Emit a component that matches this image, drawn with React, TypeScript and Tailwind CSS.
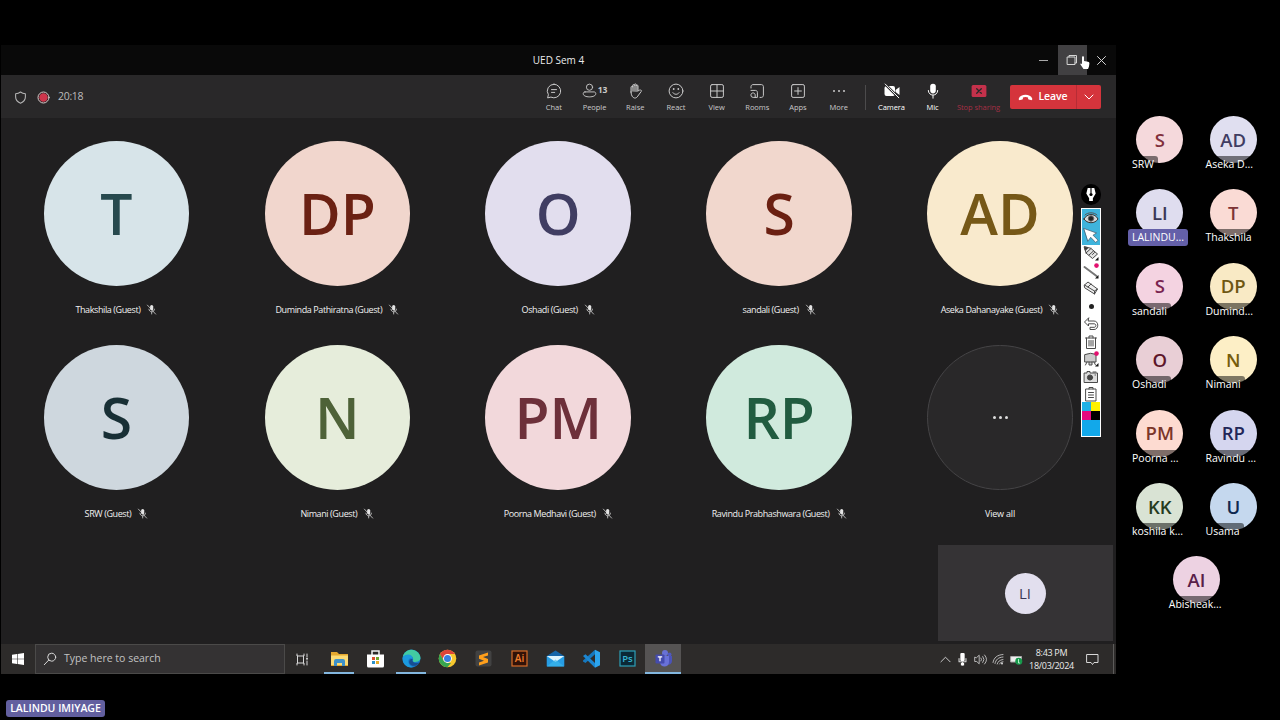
import clsx from "clsx";
import type { ReactNode } from "react";

type IconProps = { children: ReactNode; className?: string; box?: string };

const Icon = ({ children, className = "size-4", box = "0 0 16 16" }: IconProps) => (
  <svg
    viewBox={box}
    className={clsx("shrink-0", className)}
    fill="none"
    stroke="currentColor"
    strokeWidth="1"
    strokeLinecap="round"
    strokeLinejoin="round"
  >
    {children}
  </svg>
);

const guests = [
  { initials: "T", name: "Thakshila (Guest)", color: "bg-[#d7e4e9] text-[#27494e]" },
  { initials: "DP", name: "Duminda Pathiratna (Guest)", color: "bg-[#f1d6cd] text-[#6b2113]" },
  { initials: "O", name: "Oshadi (Guest)", color: "bg-[#e2deee] text-[#403d62]" },
  { initials: "S", name: "sandali (Guest)", color: "bg-[#f1d7cd] text-[#6b2012]" },
  { initials: "AD", name: "Aseka Dahanayake (Guest)", color: "bg-[#f9eacd] text-[#765817]" },
  { initials: "S", name: "SRW (Guest)", color: "bg-[#ced7de] text-[#182f35]" },
  { initials: "N", name: "Nimani (Guest)", color: "bg-[#e6eddb] text-[#4e6238]" },
  { initials: "PM", name: "Poorna Medhavi (Guest)", color: "bg-[#f2d8db] text-[#6d303a]" },
  { initials: "RP", name: "Ravindu Prabhashwara (Guest)", color: "bg-[#d0eadd] text-[#215c40]" },
];

const people = [
  { initials: "S", name: "SRW", color: "bg-[#f5d9dc] text-[#81303c]" },
  { initials: "AD", name: "Aseka D...", color: "bg-[#e0dff0] text-[#3f3c62]" },
  { initials: "LI", name: "LALINDU...", color: "bg-[#dfddef] text-[#393755]", active: true },
  { initials: "T", name: "Thakshila", color: "bg-[#fadbd5] text-[#7d3435]" },
  { initials: "S", name: "sandali", color: "bg-[#f4d3e1] text-[#7a2350]" },
  { initials: "DP", name: "Dumind...", color: "bg-[#f9eac5] text-[#6f5712]" },
  { initials: "O", name: "Oshadi", color: "bg-[#e9cfd6] text-[#5d1629]" },
  { initials: "N", name: "Nimani", color: "bg-[#fdefc6] text-[#775c0c]" },
  { initials: "PM", name: "Poorna ...", color: "bg-[#fddbd1] text-[#7b362a]" },
  { initials: "RP", name: "Ravindu ...", color: "bg-[#d5d6ef] text-[#222658]" },
  { initials: "KK", name: "koshila k...", color: "bg-[#d9e3d4] text-[#253b1d]" },
  { initials: "U", name: "Usama", color: "bg-[#c5d8ee] text-[#102950]" },
  { initials: "AI", name: "Abisheak...", color: "bg-[#edd2e2] text-[#582049]" },
];

const MutedMic = () => (
  <Icon className="size-[11px] text-[#e4e4e4]" box="0 0 12 12">
    <rect x="4.5" y="1" width="3.4" height="6" rx="1.7" fill="currentColor" stroke="none" />
    <path d="M3.2 5.6c0 4 6 4 6 0M6.2 8.7v2.2M1.5 1.2l9 9.8" strokeWidth=".8" />
  </Icon>
);

const actions = [
  {
    label: "Chat",
    icon: (
      <Icon>
        <path d="M8 1.2a6.8 6.8 0 1 1-3.1 12.9l-3.3.8.8-3.2A6.8 6.8 0 0 1 8 1.2ZM5.5 6.6h5M5.5 9.4h3.2" />
      </Icon>
    ),
  },
  {
    label: "People",
    icon: (
      <>
        <Icon className="size-[15px]">
          <circle cx="8" cy="4.5" r="3.3" />
          <path d="M3.2 9.5h9.6c1.1 0 1.9.8 1.9 1.8 0 2.3-2.8 3.5-6.7 3.5s-6.7-1.2-6.7-3.5c0-1 .8-1.8 1.9-1.8Z" />
        </Icon>
        <span className="text-[8.5px] font-bold">13</span>
      </>
    ),
  },
  {
    label: "Raise",
    icon: (
      <Icon>
        <path d="M4 9V4.200c0-1.100 1.600-1.100 1.600 0V2.500c0-1.200 1.800-1.200 1.800 0v-.8c0-1.100 1.800-1.100 1.800 0v1.200c0-1.100 1.800-1.100 1.800 0v5.200c1-1 2.100-1.400 3.200-.8.6.4.5.8 0 1.200l-3.400 4.600C8.200 17.200 4 14.500 4 9Z" />
        <path d="M4.500 4.500 6 2.500l4-1 .8 2V9l-6.300-.5z" fill="currentColor" stroke="none" opacity=".6" />
      </Icon>
    ),
  },
  {
    label: "React",
    icon: (
      <Icon>
        <circle cx="8" cy="8" r="6.900" />
        <path d="M4.900 9.700c1.600 2.200 4.600 2.200 6.200 0" />
        <path d="M5.700 6h.01M10.300 6h.01" strokeWidth="1.800" />
      </Icon>
    ),
  },
  {
    label: "View",
    icon: (
      <Icon>
        <rect x="1.600" y="1.600" width="12.800" height="12.800" rx="1.500" />
        <path d="M8 1.600v12.800M1.600 8h12.800" />
      </Icon>
    ),
  },
  {
    label: "Rooms",
    icon: (
      <Icon>
        <path d="M2 5V3.500c0-1 .9-1.900 2-1.900h8.400c1.100 0 2 .9 2 2v8.800c0 1.100-.9 2-2 2H11" />
        <path d="M2 7.400h4.400c1.200 0 2 .8 2 2v5H4.200a2.300 2.300 0 0 1-2.300-2.300c0-2.900 4.300-2.900 4.300 0v2.300" />
      </Icon>
    ),
  },
  {
    label: "Apps",
    icon: (
      <Icon>
        <rect x="1.600" y="1.600" width="12.800" height="12.800" rx="1.500" />
        <path d="M8 4.600v6.800M4.600 8h6.800" />
      </Icon>
    ),
  },
  {
    label: "More",
    icon: (
      <Icon>
        <path d="M3 8h.01M8 8h.01M13 8h.01" strokeWidth="2" />
      </Icon>
    ),
  },
];

const ActionLabel = ({ children }: { children: ReactNode }) => (
  <span className="mt-[3px] whitespace-nowrap text-[7.5px] leading-[10px] tracking-[-0.05px]">{children}</span>
);

const TitleBar = () => (
  <div className="relative flex h-[30px] items-center justify-end bg-[#090909] text-[#d5d5d5]">
    <span className="absolute inset-x-0 top-[8px] text-center text-[10px] leading-[15px] text-[#ececec]">
      UED Sem 4
    </span>
    <div className="flex w-[29px] justify-center">
      <span className="h-px w-[9px] bg-[#aaa]" />
    </div>
    <div className="flex h-full w-[29px] items-center justify-center bg-[#414042]">
      <Icon className="mr-px size-3" box="0 0 12 12">
        <path d="M1.500 3h7.500v7.500H1.500zM3 3V1.500h7.500V9H9" />
      </Icon>
    </div>
    <div className="flex w-[29px] justify-center">
      <Icon className="size-[11px]" box="0 0 11 11">
        <path d="m1.500 1.500 8 8m0-8-8 8" />
      </Icon>
    </div>
    <svg viewBox="0 0 10 14" className="absolute left-[1079px] top-[11px] h-[14px] w-[10px]" fill="#fff">
      <path d="M2 1.200C2 0 4 0 4 1.200V5l4 .8c1 .2 1.500.8 1.400 1.800L9 10.500 8 13H3.500L.5 8.500c-.6-1 .4-1.600 1.500-.5z" />
    </svg>
  </div>
);

const Toolbar = () => (
  <div className="flex h-[43px] items-center bg-[#292829] pt-px text-[#c9c9c9]">
    <div className="flex w-[532.5px] items-center pl-[13px]">
      <Icon className="size-[13px] text-[#b5b5b5]">
        <path
          d="M8 1.200c1.700 1.300 3.600 2 6 2.100v4.200c0 3.500-2 6-6 7.500-4-1.500-6-4-6-7.500V3.300c2.400-.1 4.300-.8 6-2.100Z"
          strokeWidth="1.300"
        />
      </Icon>
      <Icon className="ml-[10px] size-[13px]" box="0 0 13 13">
        <circle cx="6.500" cy="6.500" r="5.500" stroke="#dccaca" />
        <circle cx="6.500" cy="6.500" r="4.200" fill="#cf364c" stroke="none" />
      </Icon>
      <span className="ml-[8px] text-[10.5px] tracking-[-0.3px] text-[#bcbcbc]">20:18</span>
    </div>
    {actions.map(({ label, icon }) => (
      <div key={label} className="flex w-[40.7px] flex-col items-center">
        <div className="flex h-4 items-center gap-px">{icon}</div>
        <ActionLabel>{label}</ActionLabel>
      </div>
    ))}
    <span className="ml-[5.5px] h-[25px] w-px bg-[#4c4b4c]" />
    <div className="ml-[5.5px] flex w-[41px] flex-col items-center text-white">
      <Icon>
        <path
          d="M3 3h6q2 0 2 2v6q0 2-2 2H2.500Q.5 13 .5 11V5q0-2 2-2zm8.500 4L15.500 4v8l-4-3z"
          fill="currentColor"
          stroke="none"
        />
        <path d="m.8.8 14 14" stroke="#292829" strokeWidth="2.500" />
        <path d="m1.200 1 13.600 13.800" />
      </Icon>
      <ActionLabel>Camera</ActionLabel>
    </div>
    <div className="flex w-[41px] flex-col items-center text-white">
      <Icon>
        <rect x="5.200" y=".8" width="5.600" height="9.600" rx="2.800" fill="currentColor" stroke="none" />
        <path d="M3.300 7.500c0 6.200 9.400 6.200 9.400 0M8 12.500v2.700" />
      </Icon>
      <ActionLabel>Mic</ActionLabel>
    </div>
    <div className="flex w-[51px] flex-col items-center text-[#a52f45]">
      <Icon>
        <rect x=".6" y="2" width="14.800" height="12" rx="1.500" fill="#c4314b" stroke="none" />
        <path d="m5.700 5.700 4.600 4.600m0-4.600-4.600 4.600" stroke="#292829" strokeWidth="1.300" />
      </Icon>
      <ActionLabel>Stop sharing</ActionLabel>
    </div>
    <div className="ml-[6px] flex h-[24px] w-[91px] items-center rounded-[2px] bg-[#d5343c] text-white">
      <div className="flex h-full w-[67px] items-center justify-center gap-[5px] border-r border-[#b72c35]">
        <Icon className="h-[9px] w-[15px]" box="0 0 15 9">
          <path
            d="M.8 5.600C2.500.6 12.500.6 14.200 5.600c.3 1.400-.4 1.800-1.500 1.500l-2-.5c-.7-.3-.7-1-.6-2-1.200-.7-4-.7-5.200 0 .1 1 .1 1.700-.6 2l-2 .5C1.200 7.400.5 7 .8 5.600Z"
            fill="currentColor"
            stroke="none"
          />
        </Icon>
        <span className="text-[10.5px] font-semibold tracking-[-0.1px]">Leave</span>
      </div>
      <Icon className="ml-[7px] size-[10px]" box="0 0 10 10">
        <path d="m1 3 4 4 4-4" />
      </Icon>
    </div>
  </div>
);

const Stage = () => (
  <div className="relative h-[526px] bg-[#201f20]">
    <div className="grid grid-cols-[repeat(5,220.9px)] gap-y-[28px] pl-[5px] pt-[22.5px]">
      {guests.map(({ initials, name, color }) => (
        <div key={name} className="flex h-[176px] flex-col items-center">
          <div
            className={clsx(
              "flex size-[145.5px] items-center justify-center rounded-full text-[57px] font-semibold",
              color,
            )}
          >
            {initials}
          </div>
          <div className="mt-[16.5px] flex h-[14px] items-center gap-[6px] text-[9px] tracking-[-0.4px] text-[#f0f0f0]">
            <span className="whitespace-nowrap">{name}</span>
            <MutedMic />
          </div>
        </div>
      ))}
      <div className="flex h-[176px] flex-col items-center">
        <div className="flex size-[145.5px] items-center justify-center gap-[3px] rounded-full border border-[#454446] bg-[#292829]">
          <span className="size-[3px] rounded-full bg-[#ddd]" />
          <span className="size-[3px] rounded-full bg-[#ddd]" />
          <span className="size-[3px] rounded-full bg-[#ddd]" />
        </div>
        <span className="mt-[16.5px] text-[9px] leading-[14px] tracking-[-0.2px] text-[#f0f0f0]">View all</span>
      </div>
    </div>
    {/* self view */}
    <div className="absolute bottom-[3px] right-[3.5px] flex h-[96px] w-[175px] items-center justify-center bg-[#353335]">
      <div className="flex size-[41px] items-center justify-center rounded-full bg-[#e2dfee] text-[15px] font-medium text-[#393755]">
        LI
      </div>
    </div>
    <PenTools />
  </div>
);

// floating annotation palette
const PenTools = () => (
  <div className="absolute right-[15px] top-[66px] flex w-[20px] flex-col items-center text-[#4a4a4a]">
    <div className="flex h-[21px] w-5 items-center justify-center rounded-full bg-black">
      <svg viewBox="0 0 12 16" className="h-[15px] w-[12px]">
        <path d="M2.500 1h7L11 7l-3 5v3H4v-3L1 7z" fill="#fff" />
        <path d="M6 1v6" stroke="#000" strokeWidth="1.200" />
        <circle cx="6" cy="8" r="1.700" fill="#000" />
      </svg>
    </div>
    <div className="mt-[3px] flex w-[20px] flex-col border border-white bg-white">
      <div className="flex h-[36px] flex-col items-center bg-[#3fb4dc]">
        <Icon className="mt-px h-4 w-4">
          <path d="M1 9c3-6 11-6 14 0-3 5-11 5-14 0Z" fill="#d8d8d8" stroke="#333" />
          <circle cx="8" cy="8.500" r="2.700" fill="#222" stroke="#666" />
          <path d="M2 5c3-3 9-3 12 0" stroke="#555" />
        </Icon>
        <Icon className="mt-px h-[17px] w-4">
          <path d="m1 1 12.500 4.500-3.500 2.200 5 5-2.300 2.300-5-5.200L5 13.500z" fill="#fff" stroke="#456" strokeWidth=".7" />
        </Icon>
      </div>
      <div className="flex h-[157px] flex-col items-center justify-between">
        <Icon className="size-4">
          <path d="m1.500 2 1.500 6 6.500 5.500 5-4.500L8 3.500z" fill="#e2e2e2" />
          <path d="m1.500 2 3.500.8-2.500 2.500z" fill="#333" />
          <path d="m3 8 5-4.500M6 10l4.500-4M9.500 9.500l2-2" />
          <path d="M12 15.500 15.500 12v3.500z" fill="#111" stroke="none" />
        </Icon>
        <Icon className="size-4">
          <path d="m1.500 4 12 9" stroke="#777" strokeWidth="2" />
          <circle cx="13.500" cy="2.600" r="2.300" fill="#e3106f" stroke="none" />
          <path d="M12 15.500 15.500 12v3.500z" fill="#111" stroke="none" />
        </Icon>
        <Icon className="size-4">
          <path d="m1.500 5 3.500-3 9.500 7-3 5L2 8zM1.500 5l10 6v3M11.500 11l3-2M5 7l3-3" fill="#eee" />
        </Icon>
        <span className="my-[6px] size-[5px] rounded-full bg-[#222]" />
        <Icon className="size-4">
          <path d="M5.500 2 1.500 6l4 4V7.800H11c2.500 0 2.500 3.500 0 3.500H7v2.200h4c5 0 5-8.500 0-8.500H5.500z" />
        </Icon>
        <Icon className="size-4">
          <path d="M2.500 4h11M6 4V2h4v2M3.500 4v10.500h9V4M6 6.500v5.500M8 6.500v5.500M10 6.500v5.500" />
        </Icon>
        <Icon className="size-4">
          <path d="M2 3.500q6-2.500 11 0v7.500H2zM4 11l-1.500 3M11 11l1.500 3M6 11v3h3v-3" fill="#ccc" />
          <circle cx="13.500" cy="2.600" r="2.300" fill="#e3106f" stroke="none" />
          <path d="M12 15.500 15.500 12v3.500z" fill="#111" stroke="none" />
        </Icon>
        <Icon className="size-4">
          <path d="M1.500 4H4V2.500h3V4h7.500v9.500h-13z" fill="#ddd" />
          <circle cx="7" cy="8.500" r="2.600" fill="#444" />
          <path d="M12 6h.5M10 3h3" />
        </Icon>
        <Icon className="size-4">
          <path d="M3 3h10v12H3zM6 3V1.500h4V3M5.500 6.500h5M5.500 9h5M5.500 11.500h5" />
        </Icon>
      </div>
      <div className="grid h-[18px] grid-cols-2">
        <span className="bg-[#1fb1e6]" />
        <span className="bg-[#fff100]" />
        <span className="bg-[#e5097f]" />
        <span className="bg-black" />
      </div>
      <span className="h-[16px] bg-[#12a8ea]" />
    </div>
  </div>
);

const apps: { name: string; open?: boolean; active?: boolean; art: ReactNode }[] = [
  {
    name: "Explorer",
    open: true,
    art: (
      <>
        <path d="M1 3h6l2 2h9v12H1z" fill="#e4a82f" />
        <path d="M1 6.500h17V16H1z" fill="#fbdb75" />
        <path d="M4 17v-5q0-2 2-2h7q2 0 2 2v5h-3v-3H7v3z" fill="#3e91c8" />
      </>
    ),
  },
  {
    name: "Store",
    art: (
      <>
        <path d="M6 6V2h7v4" fill="none" stroke="#f4f4f4" strokeWidth="1.500" />
        <path d="M1 5.500h17V17q0 1.500-1.500 1.500h-14Q1 18.500 1 17z" fill="#fff" />
        <path d="M6 8h3v3H6z" fill="#d9502f" />
        <path d="M10 8h3v3h-3z" fill="#74a72e" />
        <path d="M6 12h3v3H6z" fill="#2d91c9" />
        <path d="M10 12h3v3h-3z" fill="#e5ad2b" />
      </>
    ),
  },
  {
    name: "Edge",
    open: true,
    art: (
      <>
        <circle cx="9.500" cy="9.500" r="9" fill="#1678cb" />
        <path d="M.8 8C2 1.500 9-1 14 2c5 3 6 9 2 10.500-3 1-6 .5-5-1.500C12 7 6 4 .8 8Z" fill="#42cba2" />
        <path d="M.8 8C5 3.500 11 5.500 10.500 10 8 8 5 11 7 15c1 2 3 3 5 3C4 20-.5 14 .8 8Z" fill="#1c9ade" />
        <path d="M10.500 10c-1 3 2 5 7 3.500-2 4-8 4.500-10 1-1-3 1-5 3-4.500Z" fill="#174e92" />
      </>
    ),
  },
  {
    name: "Chrome",
    art: (
      <>
        <circle cx="9.500" cy="9.500" r="8.800" fill="#f6c72e" />
        <path d="M1.900 5.100a8.800 8.800 0 0 1 15.200 0H9.500L5.700 11.700z" fill="#dc4538" />
        <path d="M1.900 5.100 5.700 11.700l3.800 2.200h3.500l-3.700 4.400A8.800 8.800 0 0 1 1.900 5.100Z" fill="#37a651" />
        <circle cx="9.500" cy="9.500" r="4.400" fill="#fff" />
        <circle cx="9.500" cy="9.500" r="3.500" fill="#377fdf" />
      </>
    ),
  },
  {
    name: "Sublime",
    art: (
      <>
        <rect x="1.500" y="1.500" width="16" height="16" rx="2" fill="#424242" />
        <path d="m5 6.500 9-3v3L9 8l5 2v3.500l-9 3v-3l5-1.700-5-2z" fill="#ff9f1b" />
      </>
    ),
  },
  {
    name: "Illustrator",
    art: (
      <>
        <rect x="2" y="2" width="15" height="15" fill="#321208" stroke="#d66c28" strokeWidth="1.200" />
        <text x="9.500" y="13.300" textAnchor="middle" fontSize="10" fontWeight="600" fill="#f4812d">
          Ai
        </text>
      </>
    ),
  },
  {
    name: "Mail",
    art: (
      <>
        <path d="m.8 7 8.700-5.500L18.200 7v10H.8z" fill="#1565a8" />
        <path d="M.8 7h17.400v10.500H.8z" fill="#279de4" />
        <path d="M.8 7h17.400L9.500 13z" fill="#ddf3fc" />
        <path d="m.8 17.500 8.700-7 8.700 7z" fill="#3bb9ed" opacity=".65" />
      </>
    ),
  },
  {
    name: "VS Code",
    art: (
      <>
        <path d="m13 .8 5 2.500v12.900l-5 2.500z" fill="#2ca4ed" />
        <path d="M13 .8v4.500L3.500 14 1 12.500v-1z" fill="#1678be" />
        <path d="m1 7 2.500-1.700L13 14v4.700z" fill="#1c86d1" />
      </>
    ),
  },
  {
    name: "Photoshop",
    art: (
      <>
        <rect x="2" y="2" width="15" height="15" fill="#0b2836" stroke="#2c9fb8" strokeWidth="1.200" />
        <text x="9.500" y="13.200" textAnchor="middle" fontSize="9.500" fontWeight="600" fill="#38b5d4">
          Ps
        </text>
      </>
    ),
  },
  {
    name: "Teams",
    open: true,
    active: true,
    art: (
      <>
        <circle cx="11" cy="4" r="3" fill="#6871d5" />
        <circle cx="15.500" cy="5.500" r="2" fill="#5058be" />
        <path d="M11 7h7v5c0 4-5 5-6 2z" fill="#4b53b8" />
        <path d="M6 7h9v6c0 6-9 6-9 0z" fill="#6971d8" />
        <rect x="1.500" y="5.500" width="9" height="9" rx="1" fill="#444bad" />
        <path d="M3.800 7.800h4.400M6 7.800v4.500" stroke="#fff" strokeWidth="1.200" />
      </>
    ),
  },
];

const Taskbar = () => (
  <div className="flex h-[30px] items-center bg-[#2d2b2a] text-[#d8d8d8]">
    <div className="flex w-[34px] justify-center">
      <svg viewBox="0 0 12 12" className="mr-px size-[12px]" fill="#fff">
        <path d="m0 1.700 5-.7v4.700H0zM5.600.9 12 0v5.700H5.600zM0 6.300h5V11l-5-.7zM5.600 6.300H12V12l-6.400-.9z" />
      </svg>
    </div>
    <div className="flex h-[30px] w-[250px] items-center border border-[#4b4a49] bg-[#343233]">
      <Icon className="ml-[7px] size-[14px]" box="0 0 14 14">
        <circle cx="8.700" cy="5.200" r="4" />
        <path d="m5.800 8-4.500 4.700" />
      </Icon>
      <span className="ml-[7px] text-[10.5px] text-[#c2c2c2]">Type here to search</span>
    </div>
    <div className="flex w-[36px] justify-center">
      <Icon className="mr-px size-[13px]" box="0 0 13 13">
        <path d="M1 1v2h7V1M1 12v-2h7v2M1.500 3v7M7.500 3v7M11 1v3M11 8v4" />
        <path d="M11 5.800h.01" strokeWidth="2" />
      </Icon>
    </div>
    {apps.map(({ name, art, open, active }) => (
      <div
        key={name}
        className={clsx("flex h-full w-[36px] flex-col items-center pt-[5px]", active && "bg-[#555353]")}
      >
        <svg viewBox="0 0 19 19" className="size-[19px]">
          {art}
        </svg>
        {open && <span className={clsx("mt-auto h-[2px] bg-[#83b7df]", active ? "w-full" : "w-[30px]")} />}
      </div>
    ))}
    <div className="ml-auto flex h-full items-center">
      <Icon className="size-[11px]" box="0 0 12 12">
        <path d="m1 8.500 5-5 5 5" />
      </Icon>
      <Icon className="ml-[5px] size-[13px]" box="0 0 12 12">
        <rect x="4" y="0" width="4" height="7.500" rx="1" fill="#fff" stroke="none" />
        <path d="M2.800 5v3h6.400V5M6 8v3" />
        <path d="M4.500 9h3v2.500h-3z" fill="#fff" stroke="none" />
      </Icon>
      <Icon className="ml-[5px] size-[13px]" box="0 0 13 13">
        <path
          d="M.7 4.500v4h2l2.500 2.300V2.200L2.700 4.500zM7 5q1.200 1.500 0 3M8.800 3.500q2.500 3 0 6M10.600 2q4 4.500 0 9"
          strokeWidth=".8"
        />
      </Icon>
      <Icon className="ml-[5px] size-[12px]" box="0 0 12 12">
        <path
          d="M1 9.500C2 4.500 5 2 11 1.500M3 10.500C4 6.500 6 4.500 11 4M5.200 11C6 8.500 7.500 7 11 6.500M7.500 11C8.200 9.800 9 9 11 8.800"
          strokeWidth=".8"
        />
        <circle cx="10" cy="10.500" r="1" fill="currentColor" stroke="none" />
      </Icon>
      <Icon className="ml-[6px] size-[13px]" box="0 0 13 13">
        <path d="M1 3.500h10.500V9H1z" fill="#eee" stroke="#aaa" />
        <circle cx="8.800" cy="8.300" r="3.500" fill="#17994b" stroke="none" />
        <path d="M8.500 6.500v3.500h1.200" stroke="#d7ffe5" strokeWidth=".8" />
      </Icon>
      <div className="ml-[3px] flex w-[51px] flex-col items-center text-[9px] leading-[13.5px] tracking-[-0.3px] text-[#ececec]">
        <span>8:43 PM</span>
        <span>18/03/2024</span>
      </div>
      <Icon className="ml-[9px] size-[13px]" box="0 0 13 13">
        <path d="M1 1.500h11v8H8L6.500 11.500 5 9.500H1z" />
      </Icon>
      <span className="ml-[14px] mr-[2px] h-full w-px bg-[#5c5b5a]" />
    </div>
  </div>
);

const PeopleRail = () => (
  <aside className="ml-[12.5px] flex w-[136px] flex-wrap content-start justify-center gap-x-[12px] pt-[116px]">
    {people.map(({ initials, name, color, active }) => (
      <div key={name} className="flex h-[73.4px] w-[61.5px] flex-col items-center">
        <div
          className={clsx(
            "flex size-[47px] items-center justify-center rounded-full text-[18.5px] font-semibold",
            color,
          )}
        >
          {initials}
        </div>
        <span
          className={clsx(
            "relative -ml-px -mt-[7px] h-[17px] self-start whitespace-nowrap rounded-[3px] px-1 text-[10.5px] font-medium leading-[16px] text-white",
            active ? "bg-[#6460a9]" : "bg-black/50",
          )}
        >
          {name}
        </span>
      </div>
    ))}
  </aside>
);

export default function App() {
  return (
    <div className="flex h-[720px] w-[1280px] overflow-hidden bg-black font-['Open_Sans','Noto_Sans',sans-serif]">
      <main className="w-[1116px] pl-px pt-[45px]">
        <TitleBar />
        <Toolbar />
        <Stage />
        <Taskbar />
        <div className="ml-[5px] mt-[26px] h-[17px] w-[99px] rounded-[3px] bg-[#625f9f] text-center text-[10.5px] font-semibold leading-[16px] text-white">
          LALINDU IMIYAGE
        </div>
      </main>
      <PeopleRail />
    </div>
  );
}
